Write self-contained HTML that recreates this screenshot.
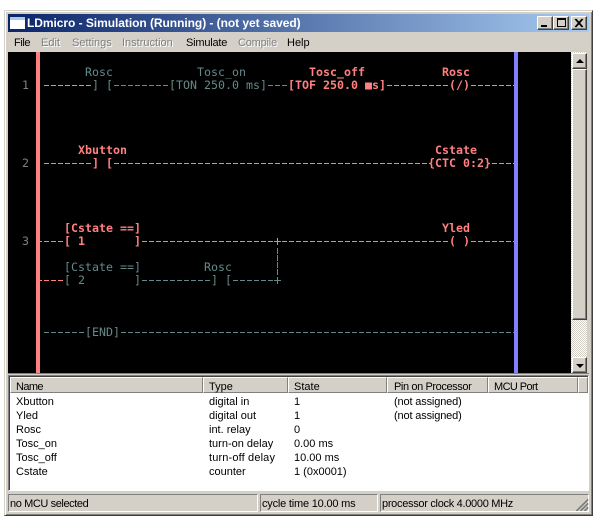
<!DOCTYPE html>
<html><head><meta charset="utf-8"><title>LDmicro</title>
<style>
html,body{margin:0;padding:0;background:#fff;width:601px;height:523px;overflow:hidden}
*{box-sizing:border-box}
div,span{position:absolute}
#win{left:4px;top:10px;width:589px;height:506px;background:#d4d0c8;border:1px solid;border-color:#d4d0c8 #404040 #404040 #d4d0c8;box-shadow:inset 1px 1px 0 #fff,inset -1px -1px 0 #808080}
#tb{left:8px;top:14px;width:581px;height:18px;background:linear-gradient(90deg,#0a246a,#a6caf0)}
#tt{left:27px;top:14px;height:18px;font:bold 12px/19px "Liberation Sans",sans-serif;color:#fff;white-space:pre;letter-spacing:-.05px}
.ui{font:11px/14px "Liberation Sans",sans-serif;color:#000;white-space:pre}
.dis{color:#808080;text-shadow:1px 1px 0 #fff}
.btn{background:#d4d0c8;border:1px solid;border-color:#fff #404040 #404040 #fff;box-shadow:inset -1px -1px 0 #808080}
.hd{top:377px;height:16px;background:#d4d0c8;border:1px solid;border-color:#fff #808080 #808080 #fff}
.st{top:494px;height:18px;border:1px solid;border-color:#808080 #fff #fff #808080}
svg{position:absolute}
svg text{white-space:pre;font-family:"DejaVu Sans Mono",monospace;font-size:11.63px}
.p{fill:#ff8080;font-weight:bold}
.g{fill:#648a8a}
.n{fill:#808080}
</style></head><body>
<div id="win"></div>
<div id="tb"></div>
<div style="left:10px;top:17px;width:15px;height:12px;background:#fff;border-top:3px solid #a6caf0"></div>
<div id="tt">LDmicro - Simulation (Running) - (not yet saved)</div>
<div class="btn" style="left:537px;top:16px;width:16px;height:14px"><div style="left:3px;top:8px;width:6px;height:2px;background:#000"></div></div>
<div class="btn" style="left:553px;top:16px;width:16px;height:14px"><div style="left:3px;top:1px;width:9px;height:9px;border:1px solid #000;border-top-width:2px"></div></div>
<div class="btn" style="left:571px;top:16px;width:16px;height:14px"><svg width="14" height="12" style="left:0;top:0"><path d="M3 2L10 10M4 2L11 10M10 2L3 10M11 2L4 10" stroke="#000" fill="none"/></svg></div>

<span class="ui" style="left:14px;top:36px;letter-spacing:-.4px">File</span>
<span class="ui dis" style="left:41px;top:36px">Edit</span>
<span class="ui dis" style="left:72px;top:36px">Settings</span>
<span class="ui dis" style="left:122px;top:36px">Instruction</span>
<span class="ui" style="left:186px;top:36px;letter-spacing:-.2px">Simulate</span>
<span class="ui dis" style="left:238px;top:36px;letter-spacing:-.2px">Compile</span>
<span class="ui" style="left:287px;top:36px">Help</span>

<svg width="563" height="321" viewBox="8 52 563 321" style="left:8px;top:52px;background:#000">
<g fill="none" shape-rendering="crispEdges" stroke-width="1" stroke-dasharray="5 2">
<g stroke="#ff8080">
<line x1="44" x2="92" y1="85.5" y2="85.5"/>
<line x1="387" x2="449" y1="85.5" y2="85.5"/>
<line x1="471" x2="514" y1="85.5" y2="85.5"/>
<line x1="44" x2="92" y1="163.5" y2="163.5"/>
<line x1="114" x2="428" y1="163.5" y2="163.5"/>
<line x1="492" x2="514" y1="163.5" y2="163.5"/>
<line x1="37" x2="64" y1="241.5" y2="241.5"/>
<line x1="142" x2="274" y1="241.5" y2="241.5"/>
<line x1="282" x2="449" y1="241.5" y2="241.5"/>
<line x1="471" x2="514" y1="241.5" y2="241.5"/>
<line x1="37" x2="64" y1="280.5" y2="280.5"/>
</g>
<g stroke="#648a8a">
<line x1="114" x2="169" y1="85.5" y2="85.5"/>
<line x1="268" x2="288" y1="85.5" y2="85.5"/>
<line x1="142" x2="211" y1="280.5" y2="280.5"/>
<line x1="233" x2="274" y1="280.5" y2="280.5"/>
<line x1="44" x2="85" y1="332.5" y2="332.5"/>
<line x1="121" x2="514" y1="332.5" y2="332.5"/>
</g>
</g>
<path d="M277.5 248V275" stroke="#648a8a" stroke-dasharray="6 1" shape-rendering="crispEdges"/>
<path d="M274 241.5H281M277.5 238V245" stroke="#ff8080" stroke-width="1" shape-rendering="crispEdges"/>
<path d="M274 280.5H281M277.5 277V284" stroke="#648a8a" stroke-width="1" shape-rendering="crispEdges"/>

<text class="n" x="22" y="89">1</text>
<text class="n" x="22" y="167">2</text>
<text class="n" x="22" y="245">3</text>

<text class="g" x="85" y="76">Rosc</text>
<text class="g" x="197" y="76">Tosc_on</text>
<text class="p" x="309" y="76">Tosc_off</text>
<text class="p" x="442" y="76">Rosc</text>
<text class="g" x="92" y="89">] [</text>
<text class="g" x="169" y="89">[TON 250.0 ms]</text>
<text class="p" x="288" y="89">[TOF 250.0 ■s]</text>
<text class="p" x="449" y="89">(/)</text>

<text class="p" x="78" y="154">Xbutton</text>
<text class="p" x="435" y="154">Cstate</text>
<text class="p" x="92" y="167">] [</text>
<text class="p" x="428" y="167">{CTC 0:2}</text>

<text class="p" x="64" y="232">[Cstate ==]</text>
<text class="p" x="442" y="232">Yled</text>
<text class="p" x="64" y="245">[ 1       ]</text>
<text class="p" x="449" y="245">( )</text>

<text class="g" x="64" y="271">[Cstate ==]</text>
<text class="g" x="204" y="271">Rosc</text>
<text class="g" x="64" y="284">[ 2       ]</text>
<text class="g" x="211" y="284">] [</text>

<text class="g" x="85" y="336">[END]</text>

<rect x="36" y="52" width="4" height="321" fill="#ff8080"/>
<rect x="514" y="52" width="4" height="321" fill="#8080ff"/>
</svg>

<div style="left:571px;top:52px;width:16px;height:321px;background-color:#fff;background-image:conic-gradient(#d4d0c8 25%,#fff 0 50%,#d4d0c8 0 75%,#fff 0);background-size:2px 2px"></div>
<div class="btn" style="left:572px;top:53px;width:15px;height:16px"><div style="left:3px;top:5px;width:0;height:0;border:4px solid transparent;border-top:0;border-bottom-color:#000"></div></div>
<div class="btn" style="left:572px;top:69px;width:15px;height:251px"></div>
<div class="btn" style="left:572px;top:357px;width:15px;height:16px"><div style="left:3px;top:6px;width:0;height:0;border:4px solid transparent;border-bottom:0;border-top-color:#000"></div></div>

<div style="left:8px;top:373px;width:581px;height:1px;background:#808080"></div>
<div style="left:8px;top:375px;width:581px;height:116px;background:#fff;border:1px solid;border-color:#808080 #fff #fff #808080;box-shadow:inset 1px 1px 0 #404040"></div>

<div class="hd" style="left:10px;width:193px"></div>
<div class="hd" style="left:203px;width:85px"></div>
<div class="hd" style="left:288px;width:99px"></div>
<div class="hd" style="left:387px;width:101px"></div>
<div class="hd" style="left:488px;width:90px"></div>
<div class="hd" style="left:578px;width:10px"></div>
<span class="ui" style="left:16px;top:380px;letter-spacing:-.6px">Name</span>
<span class="ui" style="left:209px;top:380px">Type</span>
<span class="ui" style="left:294px;top:380px">State</span>
<span class="ui" style="left:394px;top:380px;letter-spacing:-.4px">Pin on Processor</span>
<span class="ui" style="left:494px;top:380px;letter-spacing:-.6px">MCU Port</span>

<span class="ui" style="left:16px;top:395px">Xbutton</span><span class="ui" style="left:209px;top:395px">digital in</span><span class="ui" style="left:294px;top:395px">1</span><span class="ui" style="left:394px;top:395px;letter-spacing:-.15px">(not assigned)</span>
<span class="ui" style="left:16px;top:409px">Yled</span><span class="ui" style="left:209px;top:409px">digital out</span><span class="ui" style="left:294px;top:409px">1</span><span class="ui" style="left:394px;top:409px;letter-spacing:-.15px">(not assigned)</span>
<span class="ui" style="left:16px;top:423px">Rosc</span><span class="ui" style="left:209px;top:423px">int. relay</span><span class="ui" style="left:294px;top:423px">0</span>
<span class="ui" style="left:16px;top:437px">Tosc_on</span><span class="ui" style="left:209px;top:437px">turn-on delay</span><span class="ui" style="left:294px;top:437px">0.00 ms</span>
<span class="ui" style="left:16px;top:451px">Tosc_off</span><span class="ui" style="left:209px;top:451px;letter-spacing:.15px">turn-off delay</span><span class="ui" style="left:294px;top:451px">10.00 ms</span>
<span class="ui" style="left:16px;top:465px">Cstate</span><span class="ui" style="left:209px;top:465px">counter</span><span class="ui" style="left:294px;top:465px">1 (0x0001)</span>

<div class="st" style="left:8px;width:250px"></div>
<div class="st" style="left:260px;width:118px"></div>
<div class="st" style="left:380px;width:209px"></div>
<span class="ui" style="left:10px;top:497px;letter-spacing:-.4px">no MCU selected</span>
<span class="ui" style="left:262px;top:497px;letter-spacing:-.2px">cycle time 10.00 ms</span>
<span class="ui" style="left:382px;top:497px;letter-spacing:-.3px">processor clock 4.0000 MHz</span>
<svg width="14" height="14" style="left:575px;top:498px"><path d="M13 1L1 13M13 2L2 13M13 5L5 13M13 6L6 13M13 9L9 13M13 10L10 13" stroke="#808080" fill="none" shape-rendering="crispEdges"/></svg>
</body></html>
